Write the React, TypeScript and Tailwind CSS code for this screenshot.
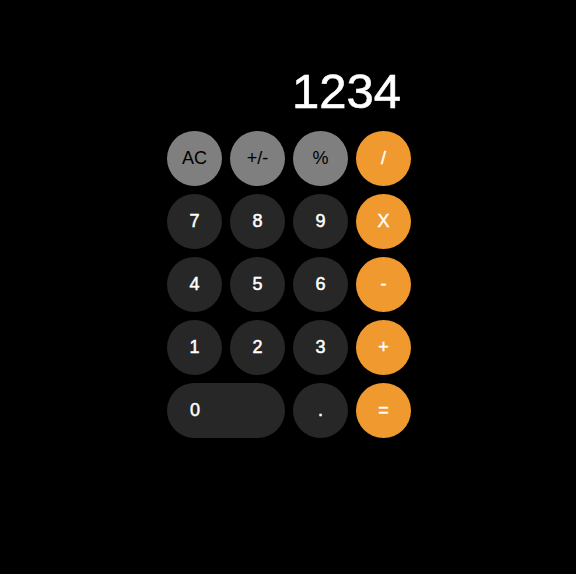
import React, { useState } from "react";

type Key = { label: string; kind: "fn" | "num" | "op"; wide?: boolean };

const keys: Key[] = [
  { label: "AC", kind: "fn" },
  { label: "+/-", kind: "fn" },
  { label: "%", kind: "fn" },
  { label: "/", kind: "op" },
  { label: "7", kind: "num" },
  { label: "8", kind: "num" },
  { label: "9", kind: "num" },
  { label: "X", kind: "op" },
  { label: "4", kind: "num" },
  { label: "5", kind: "num" },
  { label: "6", kind: "num" },
  { label: "-", kind: "op" },
  { label: "1", kind: "num" },
  { label: "2", kind: "num" },
  { label: "3", kind: "num" },
  { label: "+", kind: "op" },
  { label: "0", kind: "num", wide: true },
  { label: ".", kind: "num" },
  { label: "=", kind: "op" },
];

const styles = {
  fn: "bg-[#7f7f7f] text-black",
  num: "bg-[#272727] text-white [-webkit-text-stroke:0.5px_white]",
  op: "bg-[#f0992e] text-white [-webkit-text-stroke:0.4px_white]",
};

export default function App() {
  const [display] = useState("1234");

  return (
    <div
      className="min-h-screen bg-black flex justify-center pt-[61px] pl-[2px]"
      style={{ fontFamily: '"Liberation Sans", Arial, sans-serif' }}
    >
      <div className="w-[244px]">
        {/* display */}
        <div className="text-white text-right text-[49px] leading-[60px] pr-[10px] mb-[10px] [-webkit-text-stroke:0.6px_white]">
          {display}
        </div>

        <div className="grid grid-cols-4 gap-[8px]">
          {keys.map((k) => (
            <button
              key={k.label}
              className={`h-[55px] rounded-full text-[18px] flex items-center ${
                k.wide ? "col-span-2 justify-start pl-[23px]" : "justify-center"
              } ${styles[k.kind]}`}
            >
              {k.label}
            </button>
          ))}
        </div>
      </div>
    </div>
  );
}
